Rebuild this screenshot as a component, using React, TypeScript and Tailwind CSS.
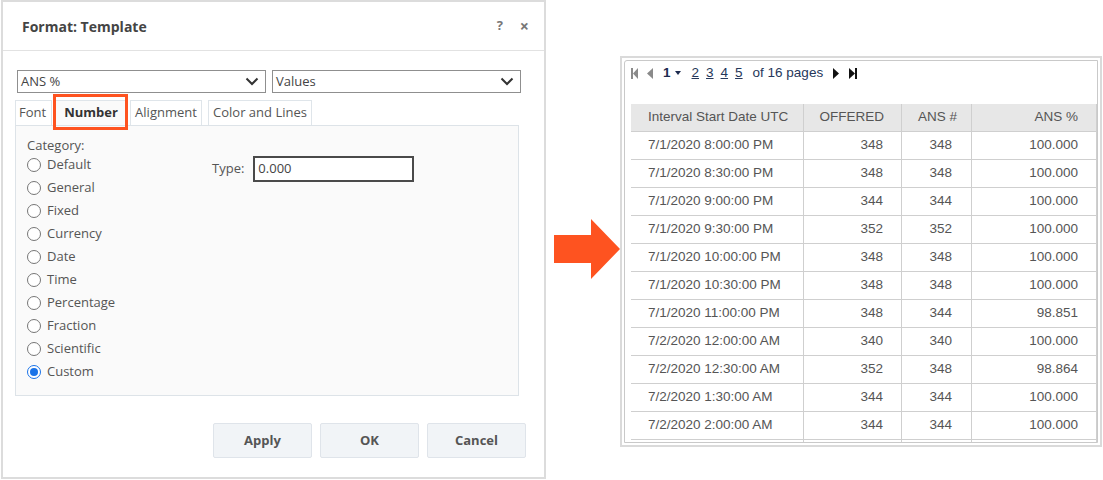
import React from "react";

const categories = [
  "Default",
  "General",
  "Fixed",
  "Currency",
  "Date",
  "Time",
  "Percentage",
  "Fraction",
  "Scientific",
  "Custom",
];

const rows = [
  ["7/1/2020 8:00:00 PM", "348", "348", "100.000"],
  ["7/1/2020 8:30:00 PM", "348", "348", "100.000"],
  ["7/1/2020 9:00:00 PM", "344", "344", "100.000"],
  ["7/1/2020 9:30:00 PM", "352", "352", "100.000"],
  ["7/1/2020 10:00:00 PM", "348", "348", "100.000"],
  ["7/1/2020 10:30:00 PM", "348", "348", "100.000"],
  ["7/1/2020 11:00:00 PM", "348", "344", "98.851"],
  ["7/2/2020 12:00:00 AM", "340", "340", "100.000"],
  ["7/2/2020 12:30:00 AM", "352", "348", "98.864"],
  ["7/2/2020 1:30:00 AM", "344", "344", "100.000"],
  ["7/2/2020 2:00:00 AM", "344", "344", "100.000"],
  // next row only peeks in under the frame
  ["", "", "", ""],
];

function Chevron() {
  return (
    <svg width="14" height="9" viewBox="0 0 14 9" className="shrink-0">
      <polyline points="1.5,1.5 7,7 12.5,1.5" fill="none" stroke="#333" strokeWidth="2" />
    </svg>
  );
}

function Select({ label }: { label: string }) {
  return (
    <div className="w-[249px] h-[23px] border border-[#8f8f8f] bg-white flex items-center justify-between pl-[3px] pr-[6px] text-[13px] text-[#444]">
      <span>{label}</span>
      <Chevron />
    </div>
  );
}

function Radio({ checked }: { checked?: boolean }) {
  if (checked) {
    return (
      <span className="w-[14px] h-[14px] rounded-full border border-[#1a73e8] bg-white flex items-center justify-center">
        <span className="w-[8px] h-[8px] rounded-full bg-[#1a73e8]" />
      </span>
    );
  }
  return <span className="w-[14px] h-[14px] rounded-full border border-[#767676] bg-white" />;
}

function Dialog() {
  return (
    <div className="ml-px w-[545px] h-[479px] border-2 border-[#dcdcdc] bg-white flex flex-col shrink-0 font-['Open_Sans',sans-serif]">
      <div className="h-[49px] border-b border-[#e2e2e2] flex items-center justify-between pl-[19px] pr-[15px]">
        <span className="text-[14px] font-bold text-[#444]">Format: Template</span>
        <div className="flex items-center gap-[17px] text-[#777] font-bold">
          <span className="text-[13px]">?</span>
          <span className="text-[16px]">×</span>
        </div>
      </div>

      <div className="px-[12px]">
        <div className="mt-[19px] ml-[2px] flex gap-[6px]">
          <Select label="ANS %" />
          <Select label="Values" />
        </div>

        <div className="mt-[7px] flex items-end h-[25px] text-[13px] text-[#555]">
          <div className="w-[37px] h-[25px] border border-b-0 border-[#dfe5ea] bg-white flex items-center pl-[3px]">Font</div>
          <div className="relative ml-[2px] w-[74px] h-[25px] border border-b-0 border-[#dfe5ea] bg-[#fafafa] flex items-center justify-center font-bold text-[#333]">
            Number
            <div className="absolute -left-[2px] -top-[7px] -right-px -bottom-[5px] border-[3px] border-[#fe5320]" />
          </div>
          <div className="ml-[2px] w-[72px] h-[25px] border border-b-0 border-[#dfe5ea] bg-white flex items-center justify-center">Alignment</div>
          <div className="ml-[6px] w-[104px] h-[25px] border border-b-0 border-[#dfe5ea] bg-white flex items-center justify-center">Color and Lines</div>
        </div>

        <div className="w-[504px] h-[271px] border border-[#dde3e8] bg-[#fafafa] flex text-[13px] text-[#555]">
          <div className="w-[196px] pl-[11px] pt-[11px]">
            <div className="h-[16px] leading-[16px]">Category:</div>
            {categories.map((c) => (
              <div key={c} className="h-[23px] flex items-center gap-[6px]">
                <Radio checked={c === "Custom"} />
                <span>{c}</span>
              </div>
            ))}
          </div>
          <div className="pt-[30px] flex items-start">
            <div className="flex items-center gap-[9px]">
              <span>Type:</span>
              <div className="w-[161px] h-[26px] border-2 border-[#4a4a4a] bg-white flex items-center pl-[3px] text-[#444]">0.000</div>
            </div>
          </div>
        </div>
      </div>

      <div className="mt-[27px] flex justify-end gap-[8px] pr-[18px]">
        {["Apply", "OK", "Cancel"].map((b) => (
          <div
            key={b}
            className="w-[99px] h-[35px] rounded-[2px] border border-[#dfe4ea] bg-[#f1f4f7] flex items-center justify-center text-[13px] font-bold text-[#555]"
          >
            {b}
          </div>
        ))}
      </div>
    </div>
  );
}

function Arrow() {
  return (
    <svg width="66" height="60" viewBox="0 0 66 60" className="mt-[219px] ml-[8px] shrink-0">
      <polygon points="0,16 37,16 37,0 66,30 37,60 37,44 0,44" fill="#fe5320" />
    </svg>
  );
}

function Pager() {
  return (
    <div className="pt-[3px] pl-[6px] h-[21px] flex items-center text-[13.5px] text-[#26375a]">
      <svg width="7" height="11" viewBox="0 0 7 11">
        <rect x="0" y="0" width="2" height="11" fill="#8a8a8a" />
        <polygon points="7,0 7,11 2,5.5" fill="#8a8a8a" />
      </svg>
      <svg width="6" height="11" viewBox="0 0 6 11" className="ml-[9px]">
        <polygon points="6,0 6,11 0,5.5" fill="#8a8a8a" />
      </svg>
      <span className="ml-[10px] font-bold text-[#1d2b4f]">1</span>
      <svg width="6" height="4" viewBox="0 0 6 4" className="ml-[4px]">
        <polygon points="0,0 6,0 3,4" fill="#1d2b4f" />
      </svg>
      <span className="ml-[11px] underline">2</span>
      <span className="ml-[7px] underline">3</span>
      <span className="ml-[7px] underline">4</span>
      <span className="ml-[7px] underline">5</span>
      <span className="ml-[10px]">of 16 pages</span>
      <svg width="6" height="11" viewBox="0 0 6 11" className="ml-[10px]">
        <polygon points="0,0 0,11 6,5.5" fill="#111" />
      </svg>
      <svg width="8" height="11" viewBox="0 0 8 11" className="ml-[10px]">
        <polygon points="0,0 0,11 6,5.5" fill="#111" />
        <rect x="6" y="0" width="2" height="11" fill="#111" />
      </svg>
    </div>
  );
}

function ReportTable() {
  const cell = "h-[28px] flex items-center border-b border-[#cfcfcf]";
  return (
    <div className="mt-[56px] w-[482px] h-[391px] border-2 border-[#dadada] p-[2px] shrink-0">
      <div className="h-full border border-[#c9c9c9] rounded-tl-[3px] overflow-hidden bg-white font-['Liberation_Sans',Arial,sans-serif]">
        <Pager />
        <div className="mt-[22px] ml-[6px] w-[466px] grid grid-cols-[173px_98px_70px_125px] text-[13.5px] text-[#555]">
          <div className={`${cell} bg-[#e7e7e7] border-r pl-[17px]`}>Interval Start Date UTC</div>
          <div className={`${cell} bg-[#e7e7e7] border-r justify-end pr-[17px]`}>OFFERED</div>
          <div className={`${cell} bg-[#e7e7e7] border-r justify-end pr-[14px]`}>ANS #</div>
          <div className={`${cell} bg-[#e7e7e7] border-r justify-end pr-[18px]`}>ANS %</div>
          {rows.map((r, i) => (
            <React.Fragment key={i}>
              <div className={`${cell} border-r pl-[17px]`}>{r[0]}</div>
              <div className={`${cell} border-r justify-end pr-[18px]`}>{r[1]}</div>
              <div className={`${cell} border-r justify-end pr-[19px]`}>{r[2]}</div>
              <div className={`${cell} border-r justify-end pr-[18px]`}>{r[3]}</div>
            </React.Fragment>
          ))}
        </div>
      </div>
    </div>
  );
}

export default function App() {
  return (
    <div className="w-[1103px] h-[480px] bg-white flex items-start overflow-hidden">
      <Dialog />
      <Arrow />
      <ReportTable />
    </div>
  );
}
